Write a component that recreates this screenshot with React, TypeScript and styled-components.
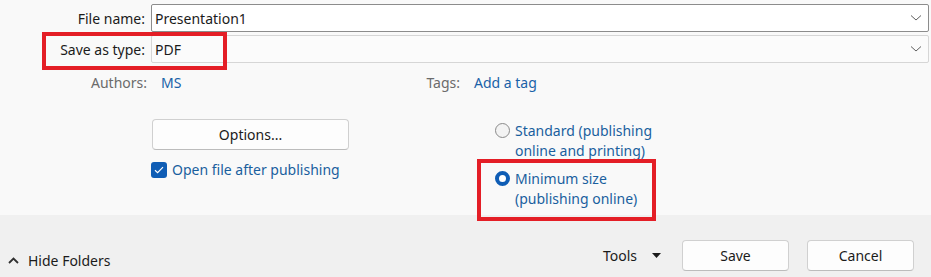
import React from 'react';
import styled, { createGlobalStyle } from 'styled-components';

const GlobalStyle = createGlobalStyle`
  body {
    margin: 0;
    background: #f9f9f9;
    font-family: 'Noto Sans', 'Open Sans', sans-serif;
    font-size: 14px;
    color: #1b1b1b;
  }
`;

const Dialog = styled.div`
  position: relative;
  width: 931px;
  height: 277px;
  display: flex;
  flex-direction: column;
  overflow: hidden;
`;

const Body = styled.div`
  height: 215px;
  padding-top: 4px;
  box-sizing: border-box;
  background: #f9f9f9;
`;

const FieldRow = styled.div`
  display: grid;
  grid-template-columns: 151px 1fr;
  align-items: center;
  margin-bottom: 3px;
  padding-right: 2px;
`;

const Label = styled.span`
  text-align: right;
  padding-right: 6px;
`;

const Combo = styled.div<{ $dim?: boolean }>`
  height: 28px;
  box-sizing: border-box;
  display: flex;
  align-items: center;
  justify-content: space-between;
  padding: 0 6px 0 3px;
  background: ${(p) => (p.$dim ? '#fbfbfb' : '#ffffff')};
  border: 1px solid ${(p) => (p.$dim ? '#d6d6d6' : '#8c8c8c')};
  border-radius: 2px;
`;

const MetaRow = styled.div`
  display: flex;
  align-items: center;
  height: 22px;
  margin-top: 8px;
`;

const MetaLabel = styled.span<{ $w: number }>`
  width: ${(p) => p.$w}px;
  text-align: right;
  color: #6b6b6b;
  padding-right: 14px;
  box-sizing: border-box;
`;

const Link = styled.span<{ $w?: number }>`
  color: #1a62a8;
  width: ${(p) => (p.$w ? `${p.$w}px` : 'auto')};
`;

const Options = styled.div`
  display: flex;
  margin-top: 26px;
`;

const LeftCol = styled.div`
  margin-left: 152px;
  width: 343px;
  display: flex;
  flex-direction: column;
`;

const Button = styled.div<{ $w: number; $h: number }>`
  width: ${(p) => p.$w}px;
  height: ${(p) => p.$h}px;
  box-sizing: border-box;
  display: flex;
  align-items: center;
  justify-content: center;
  background: #fdfdfd;
  border: 1px solid #d0d0d0;
  border-bottom-color: #bcbcbc;
  border-radius: 4px;
  color: #1b1b1b;
`;

const CheckRow = styled.label`
  display: flex;
  align-items: center;
  gap: 5px;
  margin-top: 10px;
  margin-left: -1px;
  color: #1a5f9e;
`;

const CheckBox = styled.span`
  width: 16px;
  height: 16px;
  border-radius: 3px;
  background: #0f5db5;
  display: flex;
  align-items: center;
  justify-content: center;
`;

const RadioCol = styled.div`
  display: flex;
  flex-direction: column;
  gap: 8px;
  margin-top: 2px;
`;

const RadioRow = styled.div`
  display: flex;
  align-items: flex-start;
  gap: 5px;
  color: #1a5f9e;
  line-height: 20px;
`;

const Radio = styled.span<{ $on?: boolean }>`
  width: 15px;
  height: 15px;
  margin-top: 2px;
  border-radius: 50%;
  box-sizing: border-box;
  flex-shrink: 0;
  background: ${(p) => (p.$on ? '#ffffff' : '#f3f3f3')};
  border: ${(p) => (p.$on ? '4.5px solid #0f5db5' : '1px solid #8a8a8a')};
`;

const Footer = styled.div`
  flex: 1;
  background: #f0f0f0;
  display: flex;
  align-items: center;
  padding: 18px 17px 0 8px;
`;

const HideFolders = styled.div`
  display: flex;
  align-items: center;
  gap: 9px;
  margin-top: 11px;
  flex: 1;
`;

const Tools = styled.div`
  display: flex;
  align-items: center;
  gap: 15px;
  margin-right: 21px;
`;

const ButtonGap = styled.span`
  width: 18px;
`;

const Annotation = styled.div<{ $x: number; $y: number; $w: number; $h: number }>`
  position: absolute;
  left: ${(p) => p.$x}px;
  top: ${(p) => p.$y}px;
  width: ${(p) => p.$w}px;
  height: ${(p) => p.$h}px;
  border: 4px solid #e41e26;
  box-sizing: border-box;
  pointer-events: none;
`;

const Chevron = () => (
  <svg width="12" height="8" viewBox="0 0 12 8">
    <path d="M1 1.5 L6 6 L11 1.5" fill="none" stroke="#606060" strokeWidth="1" />
  </svg>
);

export default function App() {
  return (
    <>
      <GlobalStyle />
      <Dialog>
        <Body>
          <FieldRow>
            <Label>File name:</Label>
            <Combo>
              <span>Presentation1</span>
              <Chevron />
            </Combo>
          </FieldRow>
          <FieldRow>
            <Label>Save as type:</Label>
            <Combo $dim>
              <span>PDF</span>
              <Chevron />
            </Combo>
          </FieldRow>
          <MetaRow>
            <MetaLabel $w={161}>Authors:</MetaLabel>
            <Link $w={253}>MS</Link>
            <MetaLabel $w={60}>Tags:</MetaLabel>
            <Link>Add a tag</Link>
          </MetaRow>
          <Options>
            <LeftCol>
              <Button $w={197} $h={31}>Options...</Button>
              <CheckRow>
                <CheckBox>
                  <svg width="10" height="8" viewBox="0 0 10 8">
                    <path d="M1 4.2 L3.6 6.6 L9 1.2" fill="none" stroke="#ffffff" strokeWidth="1.2" />
                  </svg>
                </CheckBox>
                Open file after publishing
              </CheckRow>
            </LeftCol>
            <RadioCol>
              <RadioRow>
                <Radio />
                <span>
                  Standard (publishing
                  <br />
                  online and printing)
                </span>
              </RadioRow>
              <RadioRow>
                <Radio $on />
                <span>
                  Minimum size
                  <br />
                  (publishing online)
                </span>
              </RadioRow>
            </RadioCol>
          </Options>
        </Body>
        <Footer>
          <HideFolders>
            <svg width="11" height="7" viewBox="0 0 11 7">
              <path d="M1 6 L5.5 1.5 L10 6" fill="none" stroke="#303030" strokeWidth="1.8" />
            </svg>
            <span>Hide Folders</span>
          </HideFolders>
          <Tools>
            <span>Tools</span>
            <svg width="9" height="5" viewBox="0 0 9 5">
              <path d="M0 0 L9 0 L4.5 5 Z" fill="#1b1b1b" />
            </svg>
          </Tools>
          <Button $w={107} $h={31}>Save</Button>
          <ButtonGap />
          <Button $w={107} $h={31}>Cancel</Button>
        </Footer>
        <Annotation $x={42} $y={32} $w={185} $h={38} />
        <Annotation $x={477} $y={159} $w={179} $h={62} />
      </Dialog>
    </>
  );
}
